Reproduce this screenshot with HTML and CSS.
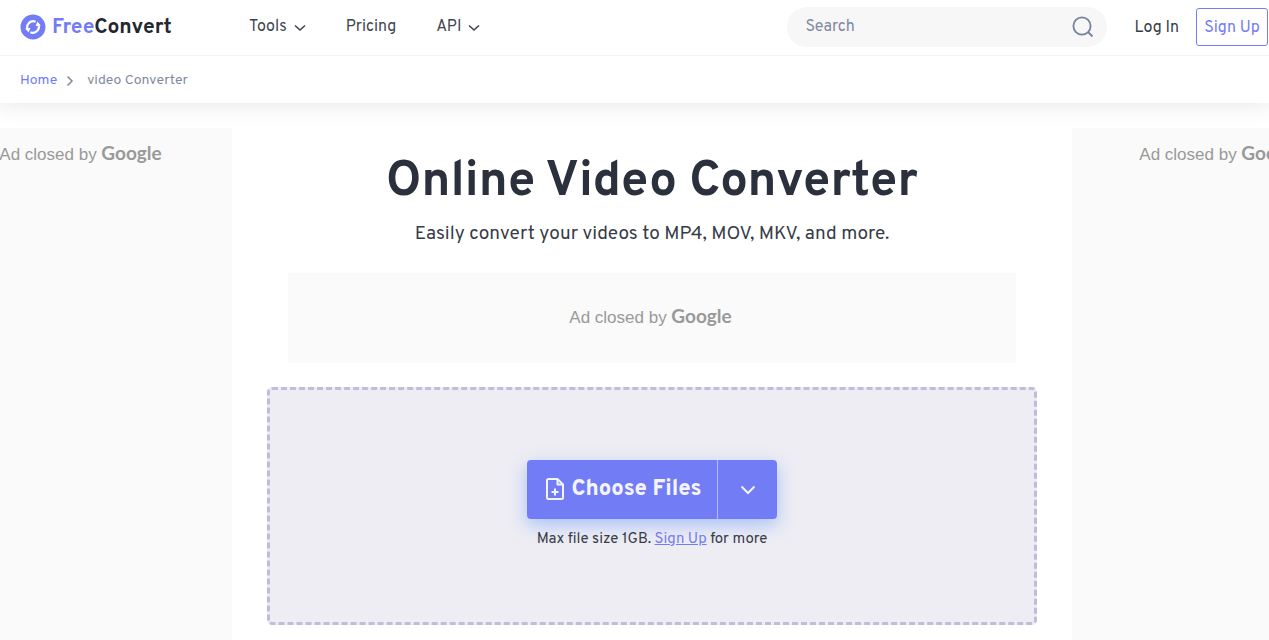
FILE: index.html
```
<!DOCTYPE html>
<html lang="en">
<head>
<meta charset="utf-8">
<meta name="viewport" content="width=device-width, initial-scale=1">
<title>Online Video Converter - FreeConvert</title>
<link rel="stylesheet" href="styles.css">
</head>
<body>
<header class="header">
  <a class="brand" href="#">
    <svg class="brand-icon" viewBox="0 0 26 26" aria-hidden="true">
      <circle cx="13" cy="13" r="12.5" fill="#727cf5"/>
      <g fill="none" stroke="#fff" stroke-width="2.2">
        <path d="M8 16.2A6 6 0 0 1 15.6 7.7"/>
        <path d="M18 9.8A6 6 0 0 1 10.4 18.3"/>
      </g>
      <path d="M5.2 14.6l5.2-.6-1.8 4.6zM20.8 11.4l-5.2.6 1.8-4.6z" fill="#fff"/>
    </svg>
    <span class="brand-name"><span class="brand-free">Free</span>Convert</span>
  </a>
  <nav class="nav" aria-label="Main">
    <button class="nav-item" type="button">Tools
      <svg class="caret" viewBox="0 0 12 8" aria-hidden="true"><path d="M1 1.500L6 6l5-4.500"/></svg>
    </button>
    <a class="nav-item" href="#">Pricing</a>
    <button class="nav-item" type="button">API
      <svg class="caret" viewBox="0 0 12 8" aria-hidden="true"><path d="M1 1.500L6 6l5-4.500"/></svg>
    </button>
  </nav>
  <form class="search" role="search">
    <input class="search-input" type="search" placeholder="Search" aria-label="Search">
    <button class="search-button" type="button" aria-label="Submit search">
      <svg viewBox="0 0 22 22" aria-hidden="true"><circle cx="10" cy="10" r="8.600"/><path d="M16 16l4.500 4.500"/></svg>
    </button>
  </form>
  <a class="login" href="#">Log In</a>
  <a class="signup" href="#">Sign Up</a>
</header>

<nav class="breadcrumb" aria-label="Breadcrumb">
  <a href="#">Home</a>
  <svg class="crumb-arrow" viewBox="0 0 8 12" aria-hidden="true"><path d="M1.500 1.500L6 6l-4.500 4.500"/></svg>
  <span>video Converter</span>
</nav>

<div class="page">
  <aside class="side side-left"><span class="ad-text">Ad closed by <b class="google">Google</b></span></aside>
  <main class="main">
    <h1 class="title">Online Video Converter</h1>
    <p class="subtitle">Easily convert your videos to MP4, MOV, MKV, and more.</p>
    <div class="banner"><span class="ad-text">Ad closed by <b class="google">Google</b></span></div>
    <section class="drop" aria-label="Upload">
      <div class="choose">
        <button class="choose-main" type="button">
          <svg class="file-icon" viewBox="0 0 20 24" aria-hidden="true">
            <path d="M12.500 2H3.500A1.500 1.500 0 0 0 2 3.500v17A1.500 1.500 0 0 0 3.500 22h13a1.500 1.500 0 0 0 1.500-1.500V7.500z"/>
            <path d="M12.500 2v5.500H18M10 11.500v7M6.500 15h7"/>
          </svg>
          <span>Choose Files</span>
        </button>
        <button class="choose-more" type="button" aria-label="More sources">
          <svg viewBox="0 0 16 10" aria-hidden="true"><path d="M1.500 1.500L8 8l6.500-6.500"/></svg>
        </button>
      </div>
      <p class="limit">Max file size 1GB. <a href="#">Sign Up</a> for more</p>
    </section>
  </main>
  <aside class="side side-right"><span class="ad-text">Ad closed by <b class="google">Google</b></span></aside>
</div>
</body>
</html>
```
FILE: styles.css
```
* { box-sizing: border-box; }
body {
  margin: 0;
  min-height: 100vh;
  display: flex;
  flex-direction: column;
  overflow: hidden;
  background: #fff;
  color: #363c48;
  font-family: Overpass, Roboto, sans-serif;
  font-size: 16px;
}
a { color: #727cf5; text-decoration: none; }
button { font: inherit; color: inherit; border: 0; padding: 0; background: none; cursor: pointer; }
svg { display: block; fill: none; stroke: currentColor; }

.header {
  display: flex;
  align-items: center;
  height: 56px;
  padding: 0 1px 2px 20px;
  border-bottom: 1px solid #f3f3f3;
}
.brand {
  display: flex;
  align-items: center;
  gap: 6px;
  width: 229px;
  color: #23272f;
  font-size: 21px;
  font-weight: 700;
}
.brand-icon { width: 26px; height: 26px; stroke: none; }
.brand-name { padding-top: 2px; }
.brand-free { color: #727cf5; }
.nav { display: flex; gap: 40px; }
.nav-item { display: flex; align-items: center; gap: 7px; color: #3f4550; }
.caret { width: 12px; height: 8px; margin-top: 2px; stroke-width: 1.6; }
.search {
  display: flex;
  align-items: center;
  width: 320px;
  height: 40px;
  margin-left: auto;
  padding: 0 13px 0 19px;
  border-radius: 20px;
  background: #f7f7f7;
}
.search-input {
  flex: 1;
  min-width: 0;
  padding: 0;
  border: 0;
  outline: 0;
  background: none;
  font: inherit;
  color: #2a303c;
}
.search-input::placeholder { color: #7f8aa1; opacity: 1; }
.search-button { color: #76829b; }
.search-button svg { width: 22px; height: 22px; stroke-width: 1.8; }
.login { margin: 0 17px 0 28px; padding-top: 2px; color: #363c48; }
.signup {
  width: 72px;
  padding: 9px 0 7px;
  border: 1px solid #727cf5;
  border-radius: 3px;
  line-height: 20px;
  text-align: center;
}

.breadcrumb {
  display: flex;
  align-items: center;
  height: 47px;
  padding: 2px 0 0 20px;
  color: #7f8aa1;
  font-size: 14px;
  box-shadow: 0 0 22px 3px rgba(0, 0, 0, 0.09);
  clip-path: inset(0 0 -30px 0);
}
.crumb-arrow { width: 8px; height: 12px; margin: 0 13px 0 9px; stroke-width: 1.5; }

.page { flex: 1; display: flex; padding-top: 25px; }
.side {
  flex: none;
  width: 300px;
  padding: 15px 3px 0 0;
  background: #fafafa;
  text-align: center;
}
.side-left { margin-left: -68px; }
.side-right { margin-right: -103px; }
.ad-text {
  color: #999;
  font-family: "Liberation Sans", Arial, sans-serif;
  font-size: 17px;
  line-height: 20px;
  white-space: nowrap;
}
.google { font-family: Lato, sans-serif; font-size: 19px; font-weight: 700; }
.main {
  flex: 1;
  min-width: 0;
  display: flex;
  flex-direction: column;
  align-items: center;
  padding: 23px 35px 15px;
}
.title { margin: 0; color: #2a303c; font-size: 49px; line-height: 64px; font-weight: 700; }
.subtitle { margin: 7px 0 27px; font-size: 19px; line-height: 24px; }
.banner {
  display: flex;
  align-items: center;
  justify-content: center;
  width: 100%;
  max-width: 728px;
  height: 90px;
  padding: 0 3px 2px 0;
  background: #fafafa;
}
.drop {
  display: flex;
  flex-direction: column;
  align-items: center;
  width: 100%;
  margin-top: 24px;
  padding: 70px 0 72px;
  border: 3px dashed #c0bddb;
  border-radius: 5px;
  background: #eeedf3;
}
.choose {
  display: flex;
  height: 59px;
  border-radius: 4px;
  background: #727cf5;
  color: #f4f4ff;
  box-shadow: 0 6px 18px rgba(80, 140, 255, 0.45);
}
.choose-main {
  display: flex;
  align-items: center;
  justify-content: center;
  gap: 7px;
  width: 191px;
  padding: 0 0 2px 2px;
  border-right: 1px solid #b8bdfa;
  font-size: 22px;
  font-weight: 800;
}
.choose-main span { padding-top: 2px; }
.file-icon { width: 20px; height: 24px; stroke-width: 2; stroke-linejoin: round; }
.choose-more { display: flex; align-items: center; justify-content: center; width: 59px; }
.choose-more svg { width: 16px; height: 10px; stroke-width: 2; }
.limit { margin: 11px 0 0; font-size: 15px; line-height: 20px; }
.limit a { text-decoration: underline; }
```
